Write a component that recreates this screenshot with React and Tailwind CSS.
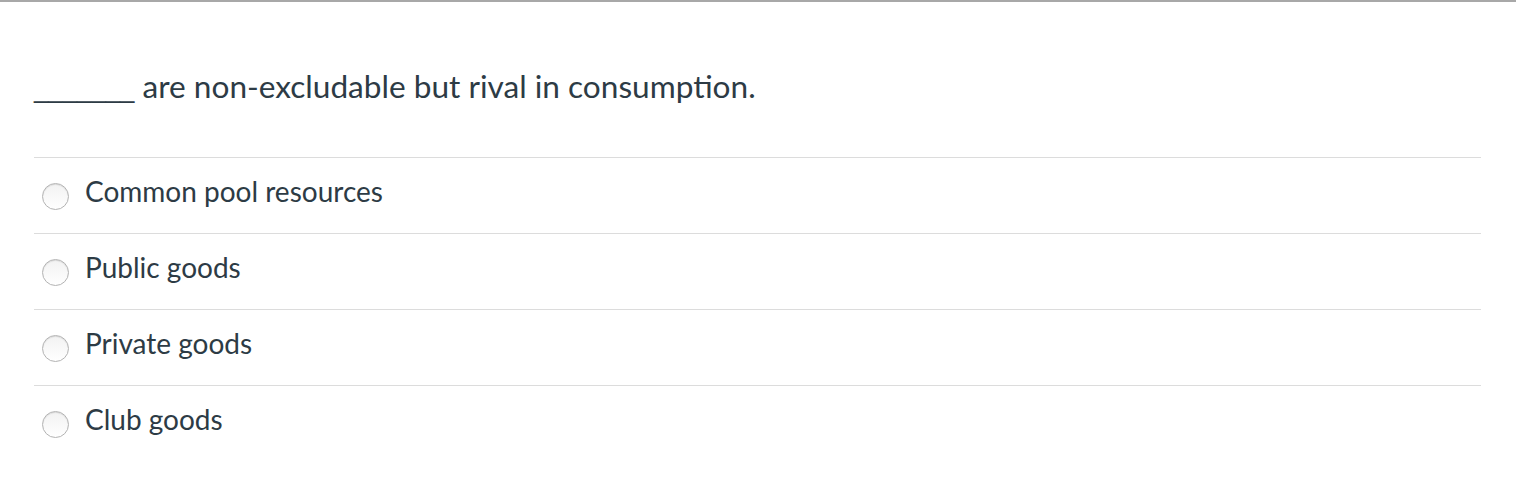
export default function App() {
  const options = ["Common pool resources", "Public goods", "Private goods", "Club goods"];

  return (
    <div className="w-[1516px] h-[496px] bg-white border-t-2 border-[#a8a8a8] font-['Lato',sans-serif] text-[#2d3b45]">
      <div className="pl-[34px] pr-[35px]">
        <p className="pt-[66px] text-[31.6px] leading-[36px]">
          <span className="font-['Liberation_Sans',sans-serif] text-[25.8px] leading-none">_______</span> are non-excludable but rival in consumption.
        </p>
        <div className="mt-[53px] border-t border-[#dcdcdc]">
          {options.map((opt) => (
            <label key={opt} className="flex items-center h-[76px] border-b border-[#dcdcdc] last:border-b-0 cursor-pointer">
              <span className="ml-[8px] mt-[1px] w-[27px] h-[27px] rounded-full border border-[#b3b3b3] bg-gradient-to-b from-[#f2f2f2] to-white shadow-[inset_0_1px_1px_rgba(0,0,0,0.1)]"></span>
              <span className="ml-[16px] text-[28px] leading-[32px] -mt-[10px]">{opt}</span>
            </label>
          ))}
        </div>
      </div>
    </div>
  );
}
